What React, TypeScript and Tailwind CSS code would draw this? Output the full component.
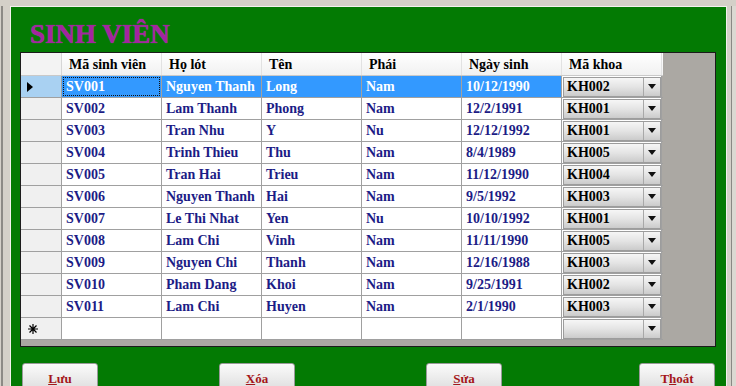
import { ReactNode } from 'react'

type SinhVien = {
  ma: string
  hoLot: string
  ten: string
  phai: string
  ngaySinh: string
  maKhoa: string
}

const DATA: SinhVien[] = [
  { ma: 'SV001', hoLot: 'Nguyen Thanh', ten: 'Long', phai: 'Nam', ngaySinh: '10/12/1990', maKhoa: 'KH002' },
  { ma: 'SV002', hoLot: 'Lam Thanh', ten: 'Phong', phai: 'Nam', ngaySinh: '12/2/1991', maKhoa: 'KH001' },
  { ma: 'SV003', hoLot: 'Tran Nhu', ten: 'Y', phai: 'Nu', ngaySinh: '12/12/1992', maKhoa: 'KH001' },
  { ma: 'SV004', hoLot: 'Trinh Thieu', ten: 'Thu', phai: 'Nam', ngaySinh: '8/4/1989', maKhoa: 'KH005' },
  { ma: 'SV005', hoLot: 'Tran Hai', ten: 'Trieu', phai: 'Nam', ngaySinh: '11/12/1990', maKhoa: 'KH004' },
  { ma: 'SV006', hoLot: 'Nguyen Thanh', ten: 'Hai', phai: 'Nam', ngaySinh: '9/5/1992', maKhoa: 'KH003' },
  { ma: 'SV007', hoLot: 'Le Thi Nhat', ten: 'Yen', phai: 'Nu', ngaySinh: '10/10/1992', maKhoa: 'KH001' },
  { ma: 'SV008', hoLot: 'Lam Chi', ten: 'Vinh', phai: 'Nam', ngaySinh: '11/11/1990', maKhoa: 'KH005' },
  { ma: 'SV009', hoLot: 'Nguyen Chi', ten: 'Thanh', phai: 'Nam', ngaySinh: '12/16/1988', maKhoa: 'KH003' },
  { ma: 'SV010', hoLot: 'Pham Dang', ten: 'Khoi', phai: 'Nam', ngaySinh: '9/25/1991', maKhoa: 'KH002' },
  { ma: 'SV011', hoLot: 'Lam Chi', ten: 'Huyen', phai: 'Nam', ngaySinh: '2/1/1990', maKhoa: 'KH003' },
]

const HEADERS = ['Mã sinh viên', 'Họ lót', 'Tên', 'Phái', 'Ngày sinh', 'Mã khoa']

// ── Petits éléments ──────────────────────────────────────────

function Combo({ value }: { value: string }) {
  return (
    <div className="flex h-[20px] w-[98px] border border-[#9c9c9c] bg-gradient-to-b from-[#f6f6f6] via-[#e4e4e4] to-[#cbcbcb]">
      <span className="flex-1 pl-[3px] leading-[18px] text-black">{value}</span>
      <span className="flex w-[17px] items-center justify-center border-l border-[#a8a8a8]">
        <svg width="8" height="5" viewBox="0 0 8 5">
          <path d="M0 0h8L4 5z" fill="#111" />
        </svg>
      </span>
    </div>
  )
}

function Cell({ children, selected, focus }: { children?: ReactNode; selected?: boolean; focus?: boolean }) {
  return (
    <div
      className={`relative flex h-full w-[100px] shrink-0 items-center border-r border-[#a0a0a0] pl-[4px] ${
        selected ? 'bg-[#3399ff] text-white' : 'bg-white text-[#1c1c86]'
      }`}
    >
      {focus && <div className="absolute inset-[1px] border border-dotted border-[#111]" />}
      <span className="whitespace-nowrap">{children}</span>
    </div>
  )
}

function Button({ label, under }: { label: string; under: number }) {
  return (
    <button
      type="button"
      className="h-[28px] w-[76px] shrink-0 rounded-[3px] border border-[#9a9a9a] bg-gradient-to-b from-[#fbfbfb] to-[#dedede] pt-[4px] text-[13px] font-bold text-[#a4161a]"
    >
      {label.slice(0, under)}
      <span className="underline">{label[under]}</span>
      {label.slice(under + 1)}
    </button>
  )
}

// ── Page ─────────────────────────────────────────────────────

export default function App() {
  return (
    <div
      className="flex h-[386px] w-[736px] overflow-hidden bg-[#d4d0c8] pt-[6px]"
      style={{ fontFamily: '"Liberation Serif", "Times New Roman", serif' }}
    >
      {/* Cadre gauche */}
      <div className="ml-[1px] w-[9px] shrink-0 border-l-2 border-[#8c8a85] bg-[#d4d0c8]" />

      {/* Zone verte */}
      <div className="flex w-[716px] shrink-0 flex-col border-l border-t border-[#f4f2ee] bg-[#037a03] pl-[9px] pr-[9px]">
        <div className="h-[45px] shrink-0 pl-[10px] pt-[12px] text-[27px] font-bold leading-[30px] text-[#a3259f] [text-shadow:0_0_1px_#c040c0]">
          SINH VIÊN
        </div>

        {/* Grille */}
        <div className="flex h-[295px] w-[696px] shrink-0 flex-col border border-[#1b1b1b] bg-[#aba8a3] text-[14px] font-bold">
          <div className="flex h-[23px] w-[642px] shrink-0 border-b border-[#c9c9c9] bg-gradient-to-b from-white to-[#f1f1f1] text-black">
            <div className="w-[41px] shrink-0 border-r border-[#d6d6d6] bg-[#f3f3f3]" />
            {HEADERS.map((h) => (
              <div
                key={h}
                className="flex w-[100px] shrink-0 items-center border-r border-[#e2e2e2] pl-[7px]"
              >
                {h}
              </div>
            ))}
          </div>

          {DATA.map((sv, i) => {
            const sel = i === 0
            return (
              <div key={sv.ma} className="flex h-[22px] w-[642px] shrink-0 border-b border-[#a0a0a0]">
                <div
                  className={`flex w-[41px] shrink-0 items-center border-r border-[#a0a0a0] pl-[6px] ${
                    sel ? 'bg-[#a9d1f2]' : 'bg-[#f0f0f0]'
                  }`}
                >
                  {sel && (
                    <svg width="6" height="10" viewBox="0 0 6 10">
                      <path d="M0 0l6 5-6 5z" fill="#000" />
                    </svg>
                  )}
                </div>
                <Cell selected={sel} focus={sel}>{sv.ma}</Cell>
                <Cell selected={sel}>{sv.hoLot}</Cell>
                <Cell selected={sel}>{sv.ten}</Cell>
                <Cell selected={sel}>{sv.phai}</Cell>
                <Cell selected={sel}>{sv.ngaySinh}</Cell>
                <div className="flex w-[100px] shrink-0 items-center border-r border-[#a0a0a0] bg-white pl-[1px]">
                  <Combo value={sv.maKhoa} />
                </div>
              </div>
            )
          })}

          {/* Nouvelle ligne */}
          <div className="flex h-[22px] w-[642px] shrink-0 border-b border-[#a0a0a0]">
            <div className="flex w-[41px] shrink-0 items-center border-r border-[#a0a0a0] bg-[#f0f0f0] pl-[7px]">
              <svg width="10" height="10" viewBox="0 0 10 10" stroke="#000" strokeWidth="1.2">
                <path d="M5 0v10M0 5h10M1.5 1.5l7 7M8.5 1.5l-7 7" />
              </svg>
            </div>
            <Cell />
            <Cell />
            <Cell />
            <Cell />
            <Cell />
            <div className="flex w-[100px] shrink-0 items-center border-r border-[#a0a0a0] bg-white pl-[1px]">
              <Combo value="" />
            </div>
          </div>
        </div>

        {/* Boutons */}
        <div className="flex pl-[2px] pt-[16px]">
          <Button label="Lưu" under={0} />
          <div className="ml-[121px]">
            <Button label="Xóa" under={0} />
          </div>
          <div className="ml-[131px]">
            <Button label="Sửa" under={0} />
          </div>
          <div className="ml-[137px]">
            <Button label="Thoát" under={1} />
          </div>
        </div>
      </div>

      {/* Cadre droit */}
      <div className="flex shrink-0">
        <div className="w-[1px] bg-[#f2f0ec]" />
        <div className="w-[4px] bg-[#d4d0c8]" />
        <div className="w-[1px] bg-[#8a8884]" />
        <div className="w-[4px] bg-[#dcd9d2]" />
      </div>
    </div>
  )
}
